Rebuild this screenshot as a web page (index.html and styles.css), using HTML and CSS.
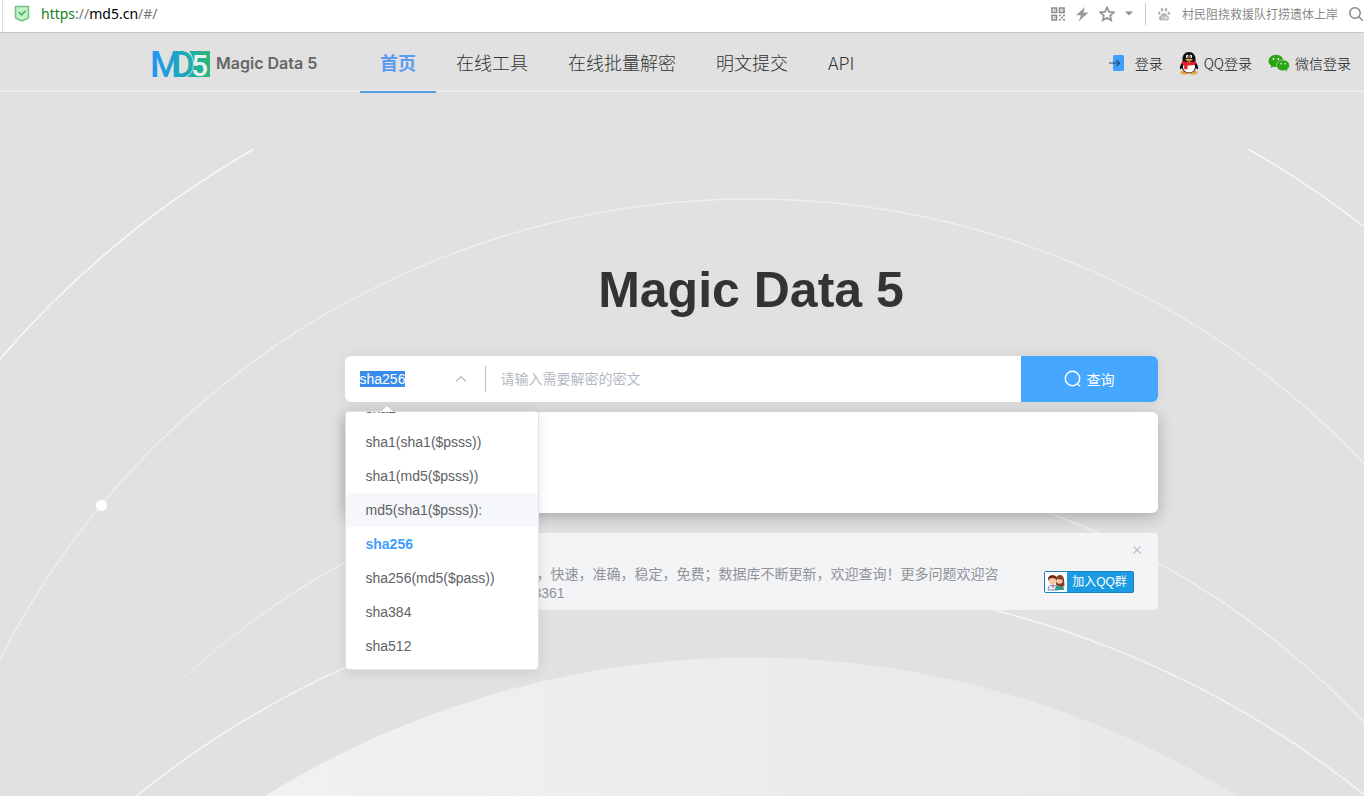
FILE: index.html
```html
<!DOCTYPE html>
<html lang="zh-CN">
<head>
  <meta charset="UTF-8">
  <meta name="viewport" content="width=device-width, initial-scale=1.0">
  <title>Magic Data 5</title>
  <link rel="stylesheet" href="styles.css">
</head>
<body>
  <!-- Address bar -->
  <div class="address-bar">
    <svg class="shield" width="16" height="17" viewBox="0 0 16 17">
      <path d="M1.5 1.5h13v10.5q0 1-1 1.600L8 16l-5.500-2.400q-1-.6-1-1.600z" fill="#c3f3c8" stroke="#74c287" stroke-width="1.600"/>
      <path d="M4.800 7.200l2.600 2.600L11.600 5.800" fill="none" stroke="#4fae69" stroke-width="1.700"/>
    </svg>
    <div class="url"><span class="scheme">https</span>://<span class="host">md5.cn</span>/#/</div>
    <div class="bar-tools">
      <button class="bar-button" aria-label="二维码">
        <svg width="14" height="14" viewBox="0 0 14 14" fill="none" stroke="#8a8a8a" stroke-width="1.600">
          <path d="M1 1h4.500v4.500H1zM8.500 1H13v4.500H8.500zM1 8.500h4.500V13H1z"/>
          <path d="M8 8.500h2M12 8.500h2M10 10.500h2M8 12.800h2M12 12.800h2M3 3.200h1M10.500 3.200h1M3 10.800h1"/>
        </svg>
      </button>
      <button class="bar-button" aria-label="极速模式">
        <svg width="14" height="16" viewBox="0 0 14 16"><path d="M10 1L1 9.200h5L3.500 15.500 13.500 6.500H8.300z" fill="#999"/></svg>
      </button>
      <button class="bar-button" aria-label="收藏">
        <svg width="16" height="16" viewBox="0 0 16 16"><path d="M8 1.500l2 4.400 4.800.5-3.600 3.200 1 4.700L8 11.900l-4.200 2.400 1-4.700L1.200 6.400 6 5.900z" fill="none" stroke="#969696" stroke-width="1.800"/></svg>
      </button>
      <button class="bar-button" aria-label="更多">
        <svg width="8" height="5" viewBox="0 0 8 5"><path d="M0 .5h8L4 4.500z" fill="#8f8f8f"/></svg>
      </button>
    </div>
    <div class="bar-search">
      <svg width="14" height="14" viewBox="0 0 14 14" fill="#b4b4b4">
        <ellipse cx="2.300" cy="6.300" rx="1.300" ry="1.700"/>
        <ellipse cx="5" cy="2.700" rx="1.300" ry="1.900"/>
        <ellipse cx="9" cy="2.700" rx="1.300" ry="1.900"/>
        <ellipse cx="11.800" cy="6.300" rx="1.300" ry="1.700"/>
        <path d="M7 6c2 0 2.500 2 4 3.200 1.800 1.500 1 4.300-1.300 4.300-1 0-1.700-.3-2.700-.3s-1.700.3-2.700.3C2 13.500 1.200 10.700 3 9.200 4.500 8 5 6 7 6z"/>
        <path d="M5.800 9v3M8 9.500v2.300h1.800V9.500" fill="none" stroke="#fff" stroke-width=".8"/>
      </svg>
      <span class="hot-word">村民阻挠救援队打捞遗体上岸</span>
      <svg width="15" height="16" viewBox="0 0 15 16" fill="none" stroke="#888" stroke-width="1.500"><circle cx="6" cy="7" r="5.200"/><path d="M9.800 10.800l4 4"/></svg>
    </div>
  </div>

  <header class="header">
    <a class="logo" href="#/">
      <svg width="61" height="44" viewBox="-3 -9 61 44" aria-hidden="true">
        <defs>
          <linearGradient id="logoFill" gradientUnits="userSpaceOnUse" x1="0" y1="0" x2="58" y2="0">
            <stop offset="0" stop-color="#2196f3"/>
            <stop offset=".5" stop-color="#1ba8bd"/>
            <stop offset="1" stop-color="#2fb673"/>
          </linearGradient>
        </defs>
        <path d="M36 1h21v26H34q6-3 7-13-1-9-5-13z" fill="url(#logoFill)"/>
        <text class="logo-five" x="38" y="26">5</text>
        <text class="logo-mark" x="-3" y="27" fill="url(#logoFill)">M</text>
        <text class="logo-mark" x="18" y="27" fill="url(#logoFill)">D</text>
      </svg>
      <span class="logo-text">Magic Data 5</span>
    </a>
    <nav class="nav">
      <a class="nav-item active" href="#/">首页</a>
      <a class="nav-item" href="#/tools">在线工具</a>
      <a class="nav-item" href="#/batch">在线批量解密</a>
      <a class="nav-item" href="#/submit">明文提交</a>
      <a class="nav-item" href="#/api">API</a>
    </nav>
    <div class="login">
      <a class="login-item" href="#/login">
        <svg width="21" height="18" viewBox="0 0 21 18">
          <rect x="4" y="1" width="11" height="16" rx="1.500" fill="#409eff"/>
          <path d="M0 9h10.500M7.500 6l3 3-3 3" fill="none" stroke="#1f4a78" stroke-width="1.200"/>
        </svg>
        登录
      </a>
      <a class="login-item" href="#/login/qq">
        <svg width="20" height="24" viewBox="0 0 20 24">
          <ellipse cx="6" cy="21.500" rx="4.500" ry="2" fill="#e8a045"/>
          <ellipse cx="14" cy="21.500" rx="4.500" ry="2" fill="#e8a045"/>
          <path d="M10 1C5.500 1 3.500 4.500 3.500 7.500v3C2 13 .3 16 1 18c.6.8 1.700-.5 2-1.200C4 20.500 7 22 10 22s6-1.500 7-5.200c.3.700 1.400 2 2 1.200.7-2-1-5-2.500-7.500v-3C16.500 4.500 14.500 1 10 1z" fill="#111"/>
          <ellipse cx="10" cy="16" rx="6" ry="5.600" fill="#fff"/>
          <ellipse cx="8.300" cy="5.600" rx="1.300" ry="1.800" fill="#fff"/>
          <ellipse cx="11.800" cy="5.600" rx="1.300" ry="1.800" fill="#fff"/>
          <circle cx="8.700" cy="5.900" r=".6"/>
          <circle cx="11.400" cy="5.900" r=".6"/>
          <ellipse cx="10" cy="8.800" rx="3.600" ry="1.100" fill="#f5a623"/>
          <path d="M3.500 10q6.500 2.400 13 0l.7 3q-4.200 1.800-8.700 1.600v3.600H5.200v-4.200q-1.200-.3-2.500-1z" fill="#e01f26"/>
        </svg>
        QQ登录
      </a>
      <a class="login-item" href="#/login/wechat">
        <svg width="22" height="18" viewBox="0 0 22 18">
          <path d="M8 .8C3.800.8.5 3.500.5 7c0 2 1 3.600 2.700 4.700L2.500 14l2.700-1.300c.9.300 1.800.4 2.800.4 4.200 0 7.500-2.700 7.500-6.100S12.200.8 8 .8z" fill="#2aa515"/>
          <path d="M15 6c-3.700 0-6.500 2.400-6.500 5.400s2.800 5.400 6.500 5.400c.8 0 1.500-.1 2.200-.3l2.300 1.200-.6-2c1.500-1 2.600-2.500 2.600-4.300C21.500 8.400 18.700 6 15 6z" fill="#2aa515" stroke="#e1e1e1" stroke-width=".6"/>
          <circle cx="5.500" cy="5" r=".9" fill="#fff"/><circle cx="10.300" cy="5" r=".9" fill="#fff"/>
          <circle cx="13" cy="9.800" r=".8" fill="#fff"/><circle cx="17.200" cy="9.800" r=".8" fill="#fff"/>
        </svg>
        微信登录
      </a>
    </div>
  </header>

  <main class="hero">
    <!-- Orbits and planet -->
    <svg class="orbits" viewBox="0 92 1364 704" preserveAspectRatio="xMidYMin slice" aria-hidden="true">
      <defs>
        <linearGradient id="planet" x1="0" y1="0" x2="1" y2="0">
          <stop offset=".2" stop-color="#f2f2f2"/>
          <stop offset=".55" stop-color="#ebebeb"/>
          <stop offset=".8" stop-color="#e8e8e8"/>
        </linearGradient>
        <linearGradient id="fade" gradientUnits="userSpaceOnUse" x1="75" y1="796" x2="345" y2="562">
          <stop offset="0" stop-color="#f0f0f0" stop-opacity="0"/>
          <stop offset="1" stop-color="#f0f0f0"/>
        </linearGradient>
      </defs>
      <g fill="none" stroke-width="1.500">
        <path d="M-20 383A980 980 0 0 1 254 149M1248 149A980 980 0 0 1 1400 256" stroke="#f8f8f8"/>
        <circle cx="751" cy="1041.500" r="842.500" stroke="#eee"/>
        <circle cx="751" cy="1303" r="844.500" stroke="url(#fade)"/>
        <circle cx="751" cy="1560" r="980.500" stroke="#f5f5f5"/>
      </g>
      <circle cx="101.500" cy="505.500" r="5.500" fill="#fff"/>
      <circle cx="751" cy="1580" r="922.500" fill="url(#planet)"/>
    </svg>

    <div class="content">
      <h1 class="title">Magic Data 5</h1>

      <form class="search">
        <div class="type-select">
          <input class="type-input" id="typeInput" type="text" value="sha256" role="combobox" aria-expanded="true" aria-controls="typeList" aria-label="类型" readonly>
          <svg class="type-arrow" width="12" height="8" viewBox="0 0 12 8"><path d="M1 6.500l5-5 5 5" fill="none" stroke="#b4b8bf" stroke-width="1.100"/></svg>
          <div class="dropdown">
            <ul class="dropdown-list" id="typeList" role="listbox">
              <li class="option" role="option">sha1</li>
              <li class="option" role="option">sha1(sha1($psss))</li>
              <li class="option" role="option">sha1(md5($psss))</li>
              <li class="option hover" role="option">md5(sha1($psss)):</li>
              <li class="option selected" role="option" aria-selected="true">sha256</li>
              <li class="option" role="option">sha256(md5($pass))</li>
              <li class="option" role="option">sha384</li>
              <li class="option" role="option">sha512</li>
            </ul>
          </div>
        </div>
        <input class="hash-input" type="text" placeholder="请输入需要解密的密文" aria-label="密文">
        <button class="search-button" type="button">
          <svg width="18" height="18" viewBox="0 0 18 18" fill="none" stroke="#fff" stroke-width="1.400"><circle cx="8.500" cy="8.500" r="7.200"/><path d="M13.200 13.700l2.800 2.600"/></svg>
          查询
        </button>
      </form>

      <div class="result"></div>

      <div class="notice">
        <p class="notice-text">本站提供在线解密查询服务，快速，准确，稳定，免费；数据库不断更新，欢迎查询！更多问题欢迎咨询请加入交流群号：512083361</p>
        <a class="qq-group" href="#/qq">
          <span class="qq-faces">
            <svg width="18" height="18" viewBox="0 0 18 18">
              <path d="M1 17q0-5 5-5t5 5z" fill="#e8f0fa" stroke="#4a6c9b" stroke-width=".8"/>
              <path d="M8 17q0-5 4.500-5t4.500 5z" fill="#2f9c86"/>
              <path d="M9 12V5q1-3 4-3t4 4l.5 7-3 .5z" fill="#8a3a22"/>
              <circle cx="12.500" cy="7.500" r="3.300" fill="#f9c9a4"/>
              <circle cx="5.500" cy="7.500" r="4" fill="#f9c9a4"/>
              <path d="M1 8q-.6-6 4.500-6T10 8q-1-2.800-4.500-3Q2 5 1 8z" fill="#6d2a1c"/>
              <path d="M9.500 6q1-2.500 4-2 2.500.8 2.500 4-1.500-2.500-6.500-2z" fill="#8a3a22"/>
              <path d="M5 12.500l1 3 1-3z" fill="#d33"/>
            </svg>
          </span>
          <span class="qq-label">加入QQ群</span>
        </a>
        <button class="notice-close" type="button" aria-label="关闭">
          <svg width="8" height="8" viewBox="0 0 8 8"><path d="M.5.500l7 7M7.500.500l-7 7" stroke="#b8bbc2" stroke-width="1.100"/></svg>
        </button>
      </div>
    </div>
  </main>

  <script>
    // Keep the end of the list in view and the current value highlighted
    const list = document.getElementById('typeList');
    list.scrollTop = list.scrollHeight;

    const typeInput = document.getElementById('typeInput');
    typeInput.focus();
    typeInput.select();
  </script>
</body>
</html>
```
FILE: styles.css
```css
* {
  box-sizing: border-box;
}

body {
  margin: 0;
  min-height: 100vh;
  display: flex;
  flex-direction: column;
  background-color: #e1e1e1;
  color: #333;
  font-family: "Liberation Sans", "Noto Sans CJK SC", sans-serif;
  font-size: 14px;
  overflow: hidden;
}

a {
  color: inherit;
  text-decoration: none;
}

button {
  border: none;
  padding: 0;
  background: none;
  font-family: inherit;
  cursor: pointer;
}

svg {
  display: block;
  flex-shrink: 0;
}

/* Address bar */
.address-bar {
  display: flex;
  align-items: center;
  height: 33px;
  padding: 0 0 5px 14px;
  background: #fff;
  border-bottom: 1px solid #c6c6c6;
  box-shadow: inset 2px 0 0 #fff, inset 3px 0 0 #ddd;
}

.url {
  margin-left: 11px;
  font-family: "Noto Sans", "Noto Sans CJK SC", sans-serif;
  font-size: 14px;
  color: #777;
}

.scheme {
  color: #178017;
}

.host {
  color: #000;
}

.bar-tools {
  display: flex;
  align-items: center;
  gap: 10px;
  margin-left: auto;
  padding-right: 12px;
}

.bar-search {
  display: flex;
  align-items: center;
  gap: 11px;
  height: 22px;
  padding-left: 11px;
  border-left: 1px solid #ccc;
  overflow: hidden;
}

.hot-word {
  font-size: 12px;
  color: #888;
}

/* Header */
.header {
  display: flex;
  align-items: center;
  height: 59px;
  padding: 0 13px 0 150px;
  border-bottom: 2px solid #ebebeb;
  white-space: nowrap;
}

.logo {
  display: flex;
  align-items: center;
  gap: 5px;
  width: 210px;
  padding-top: 2px;
}

.logo-mark {
  font-family: Roboto, sans-serif;
  font-size: 36px;
  font-weight: 500;
}

.logo-five {
  font-family: Roboto, sans-serif;
  font-size: 30px;
  font-weight: 500;
  fill: #e6f2ee;
}

.logo-text {
  font-family: Inter, sans-serif;
  font-size: 16px;
  font-weight: 600;
  color: #666;
}

.nav {
  display: flex;
  align-self: flex-start;
  position: relative;
}

.nav-item {
  padding: 0 20px;
  border-bottom: 2px solid transparent;
  font-family: "Noto Sans CJK SC", sans-serif;
  font-size: 18px;
  font-weight: 300;
  line-height: 58px;
}

.nav-item.active {
  color: #5a9cf0;
  font-weight: 700;
  border-bottom-color: #5a9cdf;
}

.login {
  display: flex;
  gap: 16px;
  margin-left: auto;
  padding-top: 2px;
}

.login-item {
  display: flex;
  align-items: center;
  gap: 5px;
  font-family: "Noto Sans CJK SC", sans-serif;
  font-weight: 300;
  color: #111;
}

/* Hero */
.hero {
  position: relative;
  z-index: 0;
  flex: 1;
  padding: 160px 0 0 138px;
}

.orbits {
  position: absolute;
  inset: 0;
  z-index: -1;
  width: 100%;
  height: 100%;
}

.content {
  max-width: 813px;
  margin: 0 auto;
}

.title {
  margin: 0 0 28px;
  font-size: 50px;
  line-height: 76px;
  text-align: center;
}

.search {
  display: flex;
  height: 46px;
  border-radius: 6px;
  background: #fff;
  box-shadow: 0 0 12px rgba(0, 0, 0, 0.08);
}

.type-select {
  position: relative;
  display: flex;
  align-items: center;
  width: 141px;
  padding: 0 19px 0 15px;
}

.type-select::after {
  content: "";
  position: absolute;
  right: 0;
  height: 26px;
  border-right: 1px solid #bbb;
}

.type-input,
.hash-input {
  flex: 1;
  min-width: 0;
  border: none;
  padding: 0;
  outline: none;
  background: none;
  font-family: inherit;
  font-size: 14px;
}

.type-input::selection {
  color: #fff;
  background: #3a8cea;
}

.hash-input {
  padding: 0 15px;
}

.hash-input::placeholder {
  color: #b5bac4;
}

.search-button {
  display: flex;
  align-items: center;
  justify-content: center;
  gap: 5px;
  width: 137px;
  border-radius: 0 6px 6px 0;
  background: #45a7ff;
  color: #fff;
  font-size: 14px;
}

/* Open list under the type field */
.dropdown {
  position: absolute;
  top: 55px;
  left: 0;
  z-index: 10;
  width: 194px;
  border: 1px solid #e0e3e9;
  border-radius: 4px;
  background: #fff;
  box-shadow: 0 2px 12px rgba(0, 0, 0, 0.1);
}

.dropdown::before {
  content: "";
  position: absolute;
  top: -6px;
  left: 35px;
  border: 6px solid transparent;
  border-top: none;
  border-bottom-color: #fff;
}

.dropdown-list {
  height: 257px;
  margin: 0;
  padding: 6px 0;
  list-style: none;
  overflow-y: auto;
  scrollbar-width: none;
}

.option {
  padding: 0 20px;
  line-height: 34px;
  color: #606266;
}

.option.hover {
  background: #f5f7fa;
}

.option.selected {
  color: #409eff;
  font-weight: 700;
}

.result {
  height: 101px;
  margin-top: 10px;
  border-radius: 6px;
  background: #fff;
  box-shadow: 0 4px 15px rgba(0, 0, 0, 0.25);
}

.notice {
  position: relative;
  display: flex;
  align-items: center;
  gap: 32px;
  min-height: 77px;
  margin-top: 20px;
  padding: 21px 24px 0;
  border-radius: 4px;
  background: #f3f4f6;
}

.notice-text {
  flex: 1;
  align-self: flex-start;
  margin: 11px 0 7px;
  line-height: 19px;
  color: #909399;
}

.qq-group {
  display: flex;
  width: 90px;
  height: 22px;
  border: 1px solid #1a7fc0;
  border-radius: 2px;
  background: #1c9be2;
  color: #fff;
}

.qq-faces {
  padding: 1px 2px;
  background: #fff;
}

.qq-label {
  flex: 1;
  text-align: center;
  font-size: 12px;
  line-height: 20px;
  white-space: nowrap;
}

.notice-close {
  position: absolute;
  top: 13px;
  right: 17px;
}
```
